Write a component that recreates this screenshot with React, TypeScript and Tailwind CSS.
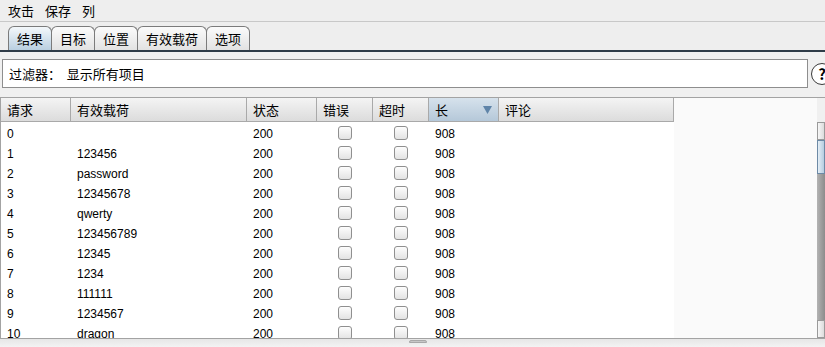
const rows: [string, string][] = [
  ['0', ''],
  ['1', '123456'],
  ['2', 'password'],
  ['3', '12345678'],
  ['4', 'qwerty'],
  ['5', '123456789'],
  ['6', '12345'],
  ['7', '1234'],
  ['8', '111111'],
  ['9', '1234567'],
  ['10', 'dragon'],
];

const tabs = ['结果', '目标', '位置', '有效载荷', '选项'];

const cjk = "font-['Noto_Sans_CJK_SC','Liberation_Sans',sans-serif]";

function Check() {
  return (
    <div className="w-[14px] h-[14px] rounded-[3px] border border-[#8f8f8f] bg-gradient-to-b from-[#fdfdfd] to-[#e3e3e3]" />
  );
}

function HeaderCell({ label, width, sorted }: { label: string; width: number; sorted?: boolean }) {
  return (
    <div
      style={{ width }}
      className={`h-full flex items-center px-[6px] border-r border-[#a9a9a9] ${
        sorted ? 'bg-gradient-to-b from-[#d6e2ec] to-[#b5c8d9] justify-between' : 'bg-gradient-to-b from-[#f4f4f4] to-[#dcdcdc]'
      }`}
    >
      <span>{label}</span>
      {sorted && (
        <svg width="9" height="8" viewBox="0 0 9 8">
          <path d="M0 0 H9 L4.5 8 Z" fill="#5f84a8" />
        </svg>
      )}
    </div>
  );
}

export default function App() {
  return (
    <div className={`w-[825px] h-[347px] overflow-hidden bg-[#f0f0f0] text-black ${cjk} text-[13px] leading-none flex flex-col`}>
      {/* menu */}
      <div className="h-[22px] flex items-center gap-[11px] pl-[8px] border-b border-[#c8c8c8] bg-[#eeeeee]">
        <span>攻击</span>
        <span>保存</span>
        <span>列</span>
      </div>

      {/* tabs */}
      <div className="h-[30px] flex items-end pl-[8px] bg-[#eeeeee] border-b-2 border-[#2f3c48]">
        {tabs.map((t, i) => (
          <div
            key={t}
            className={`h-[24px] flex items-center px-[8px] -mr-px border border-b-0 border-[#7b7b7b] rounded-t-[6px] ${
              i === 0 ? 'bg-gradient-to-b from-[#f4f8fb] to-[#b9cfe0]' : 'bg-gradient-to-b from-[#fbfbfb] to-[#e2e2e2]'
            }`}
          >
            {t}
          </div>
        ))}
      </div>

      {/* filter */}
      <div className="flex items-center mt-[7px] pl-[2px] gap-[3px]">
        <div className="w-[806px] h-[29px] shrink-0 flex items-center px-[6px] bg-white border border-[#8e8e8e]">
          过滤器：&nbsp;&nbsp;显示所有项目
        </div>
        <div className="w-[22px] h-[22px] rounded-full border-[1.5px] border-[#3a3a3a] flex items-center justify-center text-[15px] font-bold bg-white shrink-0">
          ?
        </div>
      </div>

      {/* table */}
      <div className="mt-[9px] flex-1 flex border-t border-[#a3a3a3] min-h-0">
        <div className="flex-1 flex flex-col bg-[#fafafa] border-l border-[#a3a3a3] min-w-0">
          <div className="h-[24px] flex border-b border-[#a9a9a9] w-[673px]">
            <HeaderCell label="请求" width={70} />
            <HeaderCell label="有效载荷" width={176} />
            <HeaderCell label="状态" width={70} />
            <HeaderCell label="错误" width={56} />
            <HeaderCell label="超时" width={56} />
            <HeaderCell label="长" width={70} sorted />
            <HeaderCell label="评论" width={175} />
          </div>
          <div className="flex-1 overflow-hidden w-[673px] bg-white pt-[2px] font-['Liberation_Sans',sans-serif] text-[12px]">
            {rows.map(([n, p]) => (
              <div key={n} className="h-[20px] grid grid-cols-[70px_176px_70px_56px_56px_70px_175px] items-center">
                <span className="pl-[6px]">{n}</span>
                <span className="pl-[6px]">{p}</span>
                <span className="pl-[6px]">200</span>
                <div className="flex justify-center -mt-[2px]"><Check /></div>
                <div className="flex justify-center -mt-[2px]"><Check /></div>
                <span className="pl-[6px]">908</span>
                <span />
              </div>
            ))}
          </div>
        </div>
        {/* vertical scrollbar */}
        <div className="w-[8px] flex flex-col pt-[24px] bg-[#f0f0f0]">
          <div className="h-[18px] border border-[#9a9a9a] bg-gradient-to-r from-[#f7f7f7] to-[#dcdcdc]" />
          <div className="h-[34px] border border-[#6d8aa6] bg-gradient-to-r from-[#e4eef6] to-[#b6cde0]" />
          <div className="flex-1 bg-gradient-to-r from-[#b3b3b3] to-[#8c8c8c]" />
          <div className="h-[18px] border border-[#9a9a9a] bg-gradient-to-r from-[#f7f7f7] to-[#dcdcdc]" />
        </div>
      </div>

      {/* horizontal scrollbar */}
      <div className="h-[9px] shrink-0 border-t border-[#a3a3a3] bg-gradient-to-b from-[#e6e6e6] to-[#f3f3f3] relative">
        <div className="absolute left-[409px] top-[1px] w-[18px] h-[3px] rounded-t-[2px] bg-[#c7c7c7] border border-[#a8a8a8]" />
      </div>
    </div>
  );
}
